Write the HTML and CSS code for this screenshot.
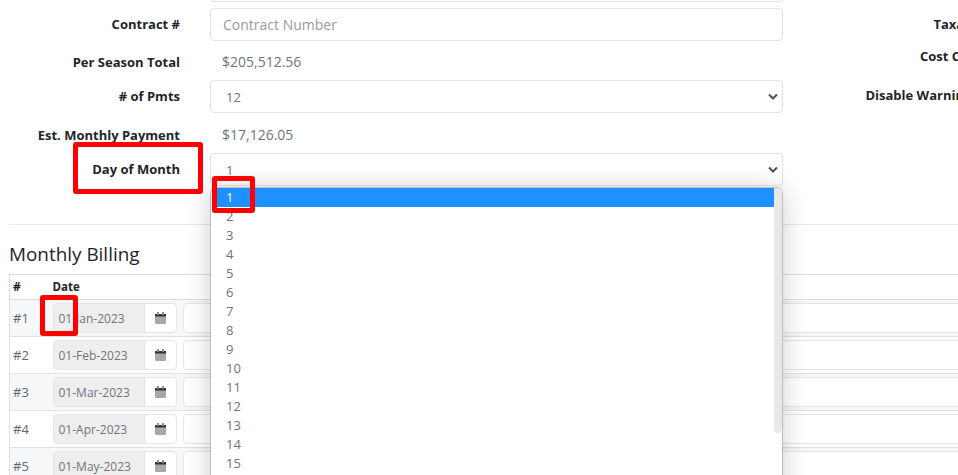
FILE: index.html
```html
<!DOCTYPE html>
<html lang="en">
<head>
    <meta charset="UTF-8">
    <title>Monthly Billing</title>
    <link rel="stylesheet" href="styles.css">
</head>
<body>
    <div class="page">
        <div class="form">
            <div class="form-left">
                <div class="row-above">
                    <input class="control" type="text">
                </div>
                <div class="row">
                    <label class="label">Contract #</label>
                    <input class="control" type="text" placeholder="Contract Number">
                </div>
                <div class="row row-static row-first">
                    <label class="label">Per Season Total</label>
                    <span class="value">$205,512.56</span>
                </div>
                <div class="row">
                    <label class="label">
                        # of Pmts
                    </label>
                    <select class="control select"><option>12</option></select>
                </div>
                <div class="row row-static row-second">
                    <label class="label">Est. Monthly Payment</label>
                    <span class="value">$17,126.05</span>
                </div>
                <div class="row">
                    <label class="label">Day of Month</label>
                    <div class="select-wrap">
                        <select class="control select"><option>1</option></select>
                        <ul class="dropdown">
                            <li class="selected">1</li>
                            <li>2</li>
                            <li>3</li>
                            <li>4</li>
                            <li>5</li>
                            <li>6</li>
                            <li>7</li>
                            <li>8</li>
                            <li>9</li>
                            <li>10</li>
                            <li>11</li>
                            <li>12</li>
                            <li>13</li>
                            <li>14</li>
                            <li>15</li>
                            <li>16</li>
                        </ul>
                        <div class="thumb"></div>
                    </div>
                </div>
            </div>
            <div class="form-right">
                <div class="side-label side-tax">Taxable</div>
                <div class="side-label side-cost">Cost Code</div>
                <div class="side-label side-warn">Disable Warnings?</div>
            </div>
        </div>

        <hr class="divider">
        <h2 class="heading">Monthly Billing</h2>

        <table class="billing">
            <thead>
                <tr><th class="col-num">#</th><th class="col-date">Date</th><th></th></tr>
            </thead>
            <tbody>
                <tr>
                    <td>#1</td>
                    <td><div class="date"><span class="date-text">01-Jan-2023</span><span class="date-btn"><svg class="cal" viewBox="0 0 11 12"><rect x="0" y="2" width="11" height="10" rx="1" fill="#a8a8a8"/><rect x="0" y="2" width="11" height="2.5" fill="#333"/><rect x="2" y="0" width="2" height="3" fill="#8a8a8a"/><rect x="7" y="0" width="2" height="3" fill="#8a8a8a"/></svg></span></div></td>
                    <td><div class="amount"></div></td>
                </tr>
                <tr>
                    <td>#2</td>
                    <td><div class="date"><span class="date-text">01-Feb-2023</span><span class="date-btn"><svg class="cal" viewBox="0 0 11 12"><rect x="0" y="2" width="11" height="10" rx="1" fill="#a8a8a8"/><rect x="0" y="2" width="11" height="2.5" fill="#333"/><rect x="2" y="0" width="2" height="3" fill="#8a8a8a"/><rect x="7" y="0" width="2" height="3" fill="#8a8a8a"/></svg></span></div></td>
                    <td><div class="amount"></div></td>
                </tr>
                <tr>
                    <td>#3</td>
                    <td><div class="date"><span class="date-text">01-Mar-2023</span><span class="date-btn"><svg class="cal" viewBox="0 0 11 12"><rect x="0" y="2" width="11" height="10" rx="1" fill="#a8a8a8"/><rect x="0" y="2" width="11" height="2.5" fill="#333"/><rect x="2" y="0" width="2" height="3" fill="#8a8a8a"/><rect x="7" y="0" width="2" height="3" fill="#8a8a8a"/></svg></span></div></td>
                    <td><div class="amount"></div></td>
                </tr>
                <tr>
                    <td>#4</td>
                    <td><div class="date"><span class="date-text">01-Apr-2023</span><span class="date-btn"><svg class="cal" viewBox="0 0 11 12"><rect x="0" y="2" width="11" height="10" rx="1" fill="#a8a8a8"/><rect x="0" y="2" width="11" height="2.5" fill="#333"/><rect x="2" y="0" width="2" height="3" fill="#8a8a8a"/><rect x="7" y="0" width="2" height="3" fill="#8a8a8a"/></svg></span></div></td>
                    <td><div class="amount"></div></td>
                </tr>
                <tr>
                    <td>#5</td>
                    <td><div class="date"><span class="date-text">01-May-2023</span><span class="date-btn"><svg class="cal" viewBox="0 0 11 12"><rect x="0" y="2" width="11" height="10" rx="1" fill="#a8a8a8"/><rect x="0" y="2" width="11" height="2.5" fill="#333"/><rect x="2" y="0" width="2" height="3" fill="#8a8a8a"/><rect x="7" y="0" width="2" height="3" fill="#8a8a8a"/></svg></span></div></td>
                    <td><div class="amount"></div></td>
                </tr>
            </tbody>
        </table>

        <div class="mark mark-label"></div>
        <div class="mark mark-option"></div>
        <div class="mark mark-date"></div>
    </div>
</body>
</html>
```
FILE: styles.css
```css
html, body {
    margin: 0;
    padding: 0;
    height: 100%;
    overflow: hidden;
    background-color: #fff;
}
.page {
    position: relative;
    width: 958px;
    height: 475px;
    overflow: hidden;
    font-family: "Open Sans", sans-serif;
    font-size: 14px;
    color: #6c757d;
}

/* top form */
.form {
    display: flex;
    width: 1200px;
}
.form-left {
    width: 783px;
    flex: none;
}
/* the field above is scrolled almost out of the window */
.row-above {
    display: flow-root;
    height: 2px;
    margin-bottom: 6px;
    padding-left: 210px;
}
.row-above .control {
    margin-top: -31px;
}
.row {
    display: flex;
    align-items: center;
    height: 33px;
}
.row-static {
    align-items: flex-start;
}
.row-first {
    height: 39px;
    padding-top: 12px;
    box-sizing: border-box;
}
.row-second {
    height: 40px;
    padding-top: 13px;
    box-sizing: border-box;
}
.label {
    width: 180px;
    flex: none;
    margin-right: 30px;
    text-align: right;
    font-size: 13px;
    font-weight: 700;
    line-height: 18px;
    color: #212529;
    position: relative;
    top: -1px;
}
.row-static .label {
    top: 0;
}
.value {
    padding-left: 12px;
    font-size: 14px;
    line-height: 18px;
    color: #6c757d;
}
.control {
    display: block;
    width: 573px;
    height: 33px;
    margin: 0;
    padding: 0 12px;
    box-sizing: border-box;
    border: 1px solid #e2e2e2;
    border-radius: 4px;
    background-color: #fff;
    font-family: "Open Sans", sans-serif;
    font-size: 14px;
    color: #6c757d;
    outline: none;
}
.control::placeholder {
    color: #9a9a9a;
}
.select {
    appearance: none;
    -webkit-appearance: none;
    padding-left: 15px;
    font-size: 13px;
    background-image: url("data:image/svg+xml,%3Csvg xmlns='http://www.w3.org/2000/svg' viewBox='0 0 10 7'%3E%3Cpath d='M1 1.5l4 4 4-4' fill='none' stroke='%23505050' stroke-width='2'/%3E%3C/svg%3E");
    background-repeat: no-repeat;
    background-position: right 4px center;
    background-size: 10px 7px;
}
.select-wrap {
    position: relative;
    width: 573px;
}

/* open list of the day select */
.dropdown {
    position: absolute;
    z-index: 2;
    top: 34px;
    left: 0;
    width: 573px;
    height: 320px;
    margin: 0;
    padding: 0 8px 0 1px;
    box-sizing: border-box;
    list-style: none;
    overflow: hidden;
    background-color: #fff;
    border: 1px solid #bdbdbd;
    border-bottom: 0;
    border-radius: 6px 6px 0 0;
    box-shadow: 0 2px 26px rgba(0, 0, 0, 0.2);
    font-size: 13px;
}
.dropdown li {
    height: 19px;
    padding-left: 14px;
    line-height: 19px;
    color: #6c757d;
}
.dropdown li.selected {
    background-color: #1e90ff;
    color: #fff;
}
.thumb {
    position: absolute;
    z-index: 3;
    top: 35px;
    left: 564px;
    width: 8px;
    height: 245px;
    background-color: #e8e8e8;
    border-radius: 0 4px 4px 4px;
}

/* right hand labels run off the window */
.form-right {
    width: 196px;
    flex: none;
    padding-top: 8px;
    font-size: 13px;
    font-weight: 700;
    line-height: 18px;
    color: #212529;
    text-align: right;
}
.side-label {
    white-space: nowrap;
}
.side-tax {
    margin-top: 7px;
    margin-right: -5px;
}
.side-cost {
    margin-top: 14px;
    margin-right: -5px;
}
.side-warn {
    margin-top: 21px;
    margin-right: -5px;
}

.divider {
    width: 1300px;
    height: 1px;
    margin: 38px 0 0 9px;
    border: 0;
    background-color: #e9e9e9;
}
.heading {
    margin: 14px 0 0 9px;
    font-size: 18.9px;
    font-weight: 400;
    line-height: 30px;
    color: #212529;
}

/* billing table */
.billing {
    width: 1300px;
    margin: 5px 0 0 9px;
    border-collapse: collapse;
    table-layout: fixed;
}
.billing th {
    height: 25px;
    padding: 0 0 2px 3px;
    box-sizing: border-box;
    border: 1px solid #dcdcdc;
    border-width: 1px 0;
    text-align: left;
    font-size: 11.5px;
    font-weight: 700;
    color: #212529;
}
.billing th:first-child {
    border-left-width: 1px;
}
.billing .col-num {
    width: 43px;
    font-size: 12px;
}
.billing .col-date {
    width: 130px;
    padding-left: 0;
}
.billing td {
    height: 37px;
    padding: 0;
    box-sizing: border-box;
    border-bottom: 1px solid #dee2e6;
    font-size: 13px;
    color: #5f666d;
}
.billing td:first-child {
    padding-left: 3px;
    border-left: 1px solid #dee2e6;
}
.billing tbody tr:nth-child(odd) {
    background-color: #f6f7f9;
}
.date {
    display: flex;
    width: 124px;
    height: 30px;
    box-sizing: border-box;
    border: 1px solid #e6e6e6;
    border-radius: 4px;
    background-color: #fff;
    overflow: hidden;
}
.date-text {
    width: 91px;
    flex: none;
    padding-left: 5px;
    box-sizing: border-box;
    background-color: #eee;
    border-right: 1px solid #e2e2e2;
    font-size: 12px;
    line-height: 30px;
    color: #6c757d;
}
.date-btn {
    flex: 1;
    display: flex;
    align-items: center;
    justify-content: center;
}
.cal {
    width: 11px;
    height: 12px;
}
.amount {
    width: 100%;
    height: 30px;
    margin-left: 0;
    box-sizing: border-box;
    border: 1px solid #e6e6e6;
    border-radius: 4px;
    background-color: #fff;
}

/* red annotation boxes from the screenshot */
.mark {
    position: absolute;
    z-index: 5;
    box-sizing: border-box;
    border: 5px solid #f00;
    border-radius: 3px;
}
.mark-label {
    left: 73px;
    top: 142px;
    width: 130px;
    height: 52px;
}
.mark-option {
    left: 212px;
    top: 176px;
    width: 43px;
    height: 37px;
}
.mark-date {
    left: 40px;
    top: 295px;
    width: 38px;
    height: 41px;
}
```
